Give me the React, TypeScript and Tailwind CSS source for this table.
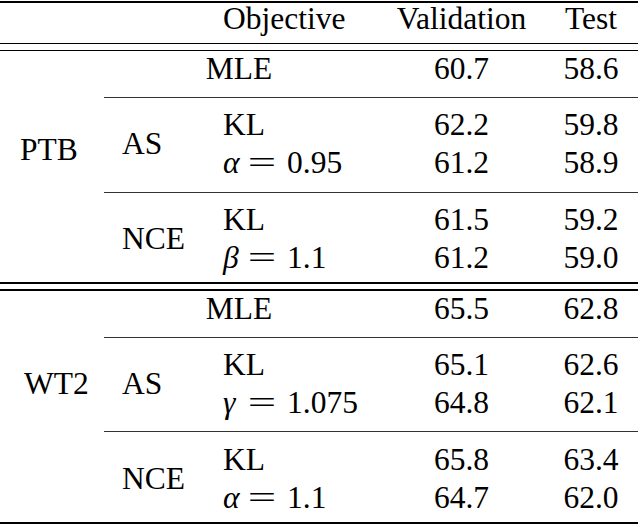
const sections = [
  {
    label: "PTB",
    labelPad: "pl-[20px] pt-[83px]",
    mle: ["60.7", "58.6"],
    groups: [
      {
        name: "AS",
        pad: "pt-[11px] pb-[6.5px]",
        rows: [
          { obj: "KL", val: "62.2", test: "59.8" },
          { sym: "α", obj: "0.95", val: "61.2", test: "58.9" },
        ],
      },
      {
        name: "NCE",
        pad: "pt-[11.5px] pb-[2px]",
        rows: [
          { obj: "KL", val: "61.5", test: "59.2" },
          { sym: "β", obj: "1.1", val: "61.2", test: "59.0" },
        ],
      },
    ],
  },
  {
    label: "WT2",
    labelPad: "pl-[24px] pt-[77px]",
    mle: ["65.5", "62.8"],
    groups: [
      {
        name: "AS",
        pad: "pt-[11px] pb-[6.5px]",
        rows: [
          { obj: "KL", val: "65.1", test: "62.6" },
          { sym: "γ", obj: "1.075", val: "64.8", test: "62.1" },
        ],
      },
      {
        name: "NCE",
        pad: "pt-[11.5px] pb-[2.5px]",
        rows: [
          { obj: "KL", val: "65.8", test: "63.4" },
          { sym: "α", obj: "1.1", val: "64.7", test: "62.0" },
        ],
      },
    ],
  },
]

type Row = { sym?: string; obj: string; val: string; test: string }

function Objective({ row }: { row: Row }) {
  if (!row.sym) return <span>{row.obj}</span>
  return (
    <span className="flex items-baseline">
      <span className="w-[19px] italic">{row.sym}</span>
      <span className="w-[39px] text-center">
        <span className="inline-block scale-x-[1.6]">=</span>
      </span>
      <span className="ml-[6px]">{row.obj}</span>
    </span>
  )
}

function DoubleRule() {
  return (
    <div>
      <div className="h-[1.5px] w-[638px] bg-black" />
      <div className="h-[5.5px]" />
      <div className="h-[1.5px] w-[638px] bg-black" />
    </div>
  )
}

function CmidRule() {
  return <div className="h-[1px] w-[534px] bg-[#333]" />
}

export default function App() {
  return (
    <div className="h-[527px] w-[641px] bg-white pt-[1px] font-[Times_New_Roman] text-[31.5px] leading-[31px] text-black">
      <div className="h-[1.5px] w-[638px] bg-black" />

      {/* header */}
      <div className="flex h-[40px] pt-[0.5px]">
        <div className="w-[205px]" />
        <div className="w-[169px] pl-[18px]">Objective</div>
        <div className="w-[175px] text-center">Validation</div>
        <div className="w-[84px] text-center">Test</div>
      </div>

      {sections.map((s) => (
        <div key={s.label}>
          <DoubleRule />
          <div className="flex">
            <div className={`w-[104px] ${s.labelPad}`}>{s.label}</div>
            <div className="w-[534px]">
              {/* MLE */}
              <div className="flex h-[46px] pt-[2px]">
                <div className="w-[270px] text-center">MLE</div>
                <div className="w-[175px] text-center">{s.mle[0]}</div>
                <div className="w-[84px] text-center">{s.mle[1]}</div>
              </div>
              {s.groups.map((g) => (
                <div key={g.name}>
                  <CmidRule />
                  <div className={`flex ${g.pad}`}>
                    <div className="w-[101px] pl-[18px] pt-[19px]">{g.name}</div>
                    <div>
                      {g.rows.map((r, i) => (
                        <div key={i} className="flex h-[38px]">
                          <div className="w-[169px] pl-[18px]">
                            <Objective row={r} />
                          </div>
                          <div className="w-[175px] text-center">{r.val}</div>
                          <div className="w-[84px] text-center">{r.test}</div>
                        </div>
                      ))}
                    </div>
                  </div>
                </div>
              ))}
            </div>
          </div>
        </div>
      ))}

      <div className="h-[1.5px] w-[638px] bg-black" />
    </div>
  )
}
